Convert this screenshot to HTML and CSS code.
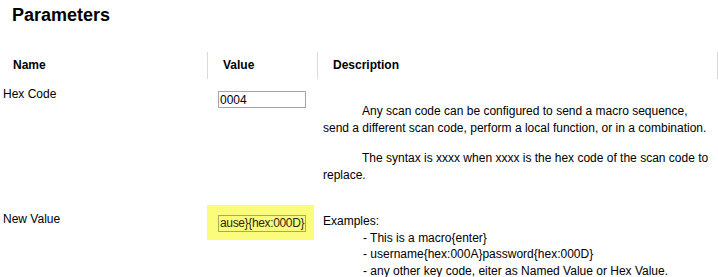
FILE: index.html
```html
<!DOCTYPE html>
<html>
<head>
<meta charset="utf-8">
<link rel="stylesheet" href="styles.css">
</head>
<body>
<h1 class="title">Parameters</h1>
<div class="table">
  <div class="head">
    <div class="hcell first">Name</div>
    <div class="hcell">Value</div>
    <div class="hcell last">Description</div>
  </div>
  <div class="row row-hex">
    <div class="name">Hex Code</div>
    <div class="value"><input class="field" type="text" value="0004"></div>
    <div class="desc desc-hex">
      <p class="para">Any scan code can be configured to send a macro sequence,<br>send a different scan code, perform a local function, or in a combination.</p>
      <p class="para para-last">The syntax is xxxx when xxxx is the hex code of the scan code to replace.</p>
    </div>
  </div>
  <div class="row row-new">
    <div class="name name-new">New Value</div>
    <div class="value value-new"><div class="highlight"><input class="field field-hl" type="text" value="ause}{hex:000D}"></div></div>
    <div class="desc desc-new">
      <div>Examples:</div>
      <div class="ex">- This is a macro{enter}</div>
      <div class="ex">- username{hex:000A}password{hex:000D}</div>
      <div class="ex">- any other key code, eiter as Named Value or Hex Value.</div>
    </div>
  </div>
</div>
</body>
</html>
```

FILE: styles.css
```css
html, body {
  margin: 0;
  padding: 0;
  background: #ffffff;
  color: #000000;
  font-family: "Liberation Sans", Arial, sans-serif;
  font-size: 12px;
}
.title {
  margin: 0;
  padding: 4px 0 0 12px;
  font-size: 18px;
  font-weight: bold;
  line-height: 22px;
  height: 48px;
  box-sizing: border-box;
}
.head {
  display: grid;
  grid-template-columns: 207px 110px 1fr;
  height: 27px;
  margin-top: 4px;
}
.hcell {
  font-weight: bold;
  border-left: 1px solid #d9d9d9;
  padding-left: 15px;
  line-height: 27px;
}
.hcell.first {
  border-left: none;
  padding-left: 13px;
}
.hcell.last {
  border-right: 1px solid #d9d9d9;
}
.row {
  display: grid;
  grid-template-columns: 207px 110px 1fr;
}
.row-hex {
  margin-top: 7px;
}
.name {
  padding-left: 3px;
  line-height: 16px;
  padding-top: 0;
}
.value {
  padding-left: 11px;
  padding-top: 5px;
}
.field {
  width: 88px;
  height: 17px;
  box-sizing: border-box;
  border: 1px solid #a6a6a6;
  margin: 0;
  padding: 0 0 0 1px;
  font-family: "Liberation Sans", Arial, sans-serif;
  font-size: 12px;
  color: #000;
  background: #fff;
  outline: none;
}
.desc {
  padding-left: 6px;
  line-height: 16.7px;
}
.desc-hex {
  padding-top: 17px;
}
.para {
  margin: 0 0 14px 0;
  text-indent: 39px;
}
.para-last {
  margin-bottom: 10px;
}
.name-new {
  padding-top: 17px;
}
.value-new {
  padding-left: 0;
  padding-top: 11px;
}
.highlight {
  width: 107px;
  height: 35px;
  box-sizing: border-box;
  background: #fcfc7c;
  padding: 10px 0 0 11px;
}
.field-hl {
  background: transparent;
  border-color: #a9a85e;
  color: #2a2a10;
  letter-spacing: -0.35px;
}
.desc-new {
  padding-top: 19px;
}
.ex {
  padding-left: 40px;
}
```
